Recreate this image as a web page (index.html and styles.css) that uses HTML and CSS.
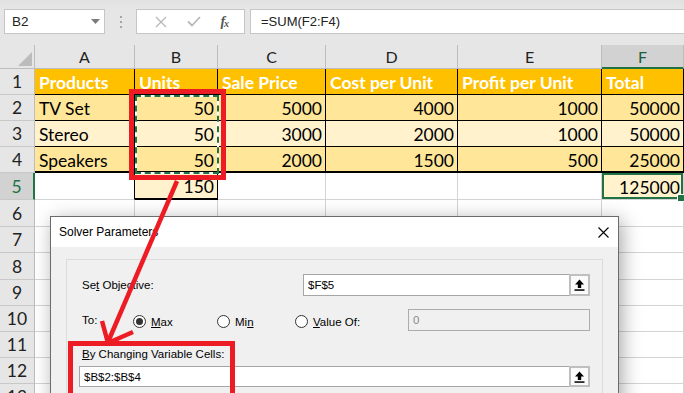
FILE: index.html
```html
<!DOCTYPE html>
<html>
<head>
<meta charset="utf-8">
<link rel="stylesheet" href="styles.css">
</head>
<body>
<div class="app">
  <div class="fbar">
    <div class="namebox"><span>B2</span><svg class="dd" width="9" height="5" viewBox="0 0 9 5"><path d="M0 0 H9 L4.5 5 Z" fill="#7a7a7a"/></svg></div>
    <div class="grip"><i></i><i></i><i></i></div>
    <div class="fxbtns">
      <svg width="12" height="12" viewBox="0 0 12 12"><path d="M1 1 L11 11 M11 1 L1 11" stroke="#b9b9b9" stroke-width="1.4"/></svg>
      <svg width="14" height="11" viewBox="0 0 14 11"><path d="M1 5.5 L5 9.5 L13 1" stroke="#b9b9b9" stroke-width="1.8" fill="none"/></svg>
      <span class="fx">f<sub>x</sub></span>
    </div>
    <div class="formula">=SUM(F2:F4)</div>
  </div>

  <div class="sheet">
    <div class="corner"><svg width="14" height="14" viewBox="0 0 14 14"><path d="M14 0 V14 H0 Z" fill="#bcbcbc"/></svg></div>
    <div class="ch">A</div><div class="ch">B</div><div class="ch">C</div><div class="ch">D</div><div class="ch">E</div><div class="ch sel">F</div>

    <div class="rh">1</div>
    <div class="c d hd">Products</div><div class="c d hd">Units</div><div class="c d hd">Sale Price</div><div class="c d hd">Cost per Unit</div><div class="c d hd">Profit per Unit</div><div class="c d hd">Total</div>

    <div class="rh">2</div>
    <div class="c d dk">TV Set</div><div class="c d dk n">50</div><div class="c d dk n">5000</div><div class="c d dk n">4000</div><div class="c d dk n">1000</div><div class="c d dk n">50000</div>

    <div class="rh">3</div>
    <div class="c d lt">Stereo</div><div class="c d lt n">50</div><div class="c d lt n">3000</div><div class="c d lt n">2000</div><div class="c d lt n">1000</div><div class="c d lt n">50000</div>

    <div class="rh">4</div>
    <div class="c d dk last">Speakers</div><div class="c d dk last n">50</div><div class="c d dk last n">2000</div><div class="c d dk last n">1500</div><div class="c d dk last n">500</div><div class="c d dk last n">25000</div>

    <div class="rh rsel">5</div>
    <div class="c bl"></div><div class="c lt n tot">150</div><div class="c"></div><div class="c"></div><div class="c"></div><div class="c lt n active">125000</div>

    <div class="rh">6</div><div class="c"></div><div class="c"></div><div class="c"></div><div class="c"></div><div class="c"></div><div class="c"></div>
    <div class="rh">7</div><div class="c"></div><div class="c"></div><div class="c"></div><div class="c"></div><div class="c"></div><div class="c"></div>
    <div class="rh">8</div><div class="c"></div><div class="c"></div><div class="c"></div><div class="c"></div><div class="c"></div><div class="c"></div>
    <div class="rh">9</div><div class="c"></div><div class="c"></div><div class="c"></div><div class="c"></div><div class="c"></div><div class="c"></div>
    <div class="rh">10</div><div class="c"></div><div class="c"></div><div class="c"></div><div class="c"></div><div class="c"></div><div class="c"></div>
    <div class="rh">11</div><div class="c"></div><div class="c"></div><div class="c"></div><div class="c"></div><div class="c"></div><div class="c"></div>
    <div class="rh">12</div><div class="c"></div><div class="c"></div><div class="c"></div><div class="c"></div><div class="c"></div><div class="c"></div>
    <div class="rh">13</div><div class="c"></div><div class="c"></div><div class="c"></div><div class="c"></div><div class="c"></div><div class="c"></div>
  </div>

  <div class="ants"></div>
  <div class="redbox rb1"></div>

  <div class="dialog">
    <div class="titlebar">
      <span>Solver Parameters</span>
      <svg width="11" height="11" viewBox="0 0 11 11"><path d="M0.5 0.5 L10.5 10.5 M10.5 0.5 L0.5 10.5" stroke="#000" stroke-width="1.1"/></svg>
    </div>
    <div class="dbody">
      <div class="group">
        <div class="row r1">
          <span class="lbl">Se<u>t</u> Objective:</span>
          <div class="inp obj"><span>$F$5</span><div class="pick"><svg width="11" height="12" viewBox="0 0 11 12"><path d="M5.5 0.5 L1 5.5 H3.8 V9 H7.2 V5.5 H10 Z" fill="#000"/><rect x="0.5" y="10.3" width="10" height="1.5" fill="#000"/></svg></div></div>
        </div>
        <div class="row r2">
          <span class="lbl to">To:</span>
          <span class="radio w1"><i class="dot on"></i><span><u>M</u>ax</span></span>
          <span class="radio w2"><i class="dot"></i><span>Mi<u>n</u></span></span>
          <span class="radio"><i class="dot"></i><span><u>V</u>alue Of:</span></span>
          <div class="inp val"><span>0</span></div>
        </div>
        <div class="row r3"><span class="lbl"><u>B</u>y Changing Variable Cells:</span></div>
        <div class="row r4">
          <div class="inp chg"><span>$B$2:$B$4</span><div class="pick"><svg width="11" height="12" viewBox="0 0 11 12"><path d="M5.5 0.5 L1 5.5 H3.8 V9 H7.2 V5.5 H10 Z" fill="#000"/><rect x="0.5" y="10.3" width="10" height="1.5" fill="#000"/></svg></div></div>
        </div>
      </div>
    </div>
  </div>

  <div class="redbox rb2"></div>

  <svg class="arrow" width="684" height="393" viewBox="0 0 684 393">
    <path d="M177 181 L108 342" stroke="#ed1c24" stroke-width="4.5" fill="none"/>
    <path d="M102 321 L108 343 L133 332" stroke="#ed1c24" stroke-width="4.5" fill="none" stroke-linejoin="miter"/>
  </svg>
</div>
</body>
</html>
```

FILE: styles.css
```css
* { box-sizing: border-box; }
html, body { margin: 0; padding: 0; }
body { background: #fff; width: 684px; height: 393px; overflow: hidden; }

.app { position: relative; width: 684px; height: 393px; overflow: hidden; font-family: "Lato", sans-serif; }

/* formula bar */
.fbar {
  height: 45px;
  background: linear-gradient(#e1e1e1 0, #e6e6e6 8px);
  display: flex;
  align-items: flex-start;
  padding-top: 9px;
  padding-left: 4px;
}
.namebox {
  width: 101px; height: 25px;
  background: #fff; border: 1px solid #c6c6c6;
  display: flex; align-items: center; justify-content: space-between;
  padding: 0 4px 0 7px;
  font: 13.5px "Liberation Sans", sans-serif; color: #222;
}
.grip { width: 31px; height: 25px; display: flex; flex-direction: column; align-items: center; justify-content: center; gap: 3px; }
.grip i { width: 2px; height: 2px; background: #a6a6a6; display: block; }
.fxbtns {
  width: 109px; height: 25px;
  background: #fff; border: 1px solid #c6c6c6;
  display: flex; align-items: center; justify-content: space-around;
  padding: 0 6px 0 8px;
}
.fx { font: italic 14px "Liberation Serif", serif; color: #555; font-weight: bold; letter-spacing: -1px; }
.fx sub { font-size: 10px; vertical-align: -1px; }
.formula {
  margin-left: 5px; flex: 1; height: 25px;
  background: #fff; border: 1px solid #c6c6c6; border-right: none;
  padding-left: 10px;
  font: 13px/23px "Liberation Sans", sans-serif; color: #222;
}

/* sheet */
.sheet {
  display: grid;
  grid-template-columns: 35px 100px 83px 108px 132px 144px 82px;
  grid-template-rows: 24px 26px 26px 26px 26px 27px 27px 26px 27px 26px 26px 26px 26px 26px;
}
.corner { background: #e6e6e6; border-right: 1px solid #bdbdbd; border-bottom: 1px solid #bdbdbd; display: flex; align-items: flex-end; justify-content: flex-end; padding: 0 2px 2px 0; }
.ch {
  background: #e6e6e6; border-right: 1px solid #bdbdbd; border-bottom: 1px solid #bdbdbd;
  display: flex; align-items: center; justify-content: center;
  font-size: 16px; color: #222;
}
.ch.sel { background: #d2d2d2; border-bottom: 2px solid #217346; color: #1c5d38; }
.rh {
  background: #e6e6e6; border-right: 1px solid #bdbdbd; border-bottom: 1px solid #c8c8c8;
  display: flex; align-items: center; justify-content: center;
  font-size: 17.5px; color: #222;
}
.rh.rsel { background: #d2d2d2; color: #217346; border-right: 2px solid #217346; }
.c {
  border-right: 1px solid #d4d4d4; border-bottom: 1px solid #d4d4d4;
  display: flex; align-items: center;
  padding: 2px 3px 0 4px;
  font-size: 17.5px; color: #000; white-space: nowrap; overflow: hidden;
}
.c.n { justify-content: flex-end; }
.c.d { border-right-color: #000; border-bottom-color: #000; }
.c.hd { background: #ffc000; color: #fff; font-weight: bold; }
.c.dk { background: #ffe699; }
.c.lt { background: #fff2cc; }
.c.last { border-bottom: 2px solid #000; }
.c.bl { border-right-color: #000; }
.c.tot { border-right-color: #000; border-bottom: 2px solid #000; }
.c.active { position: relative; box-shadow: inset 0 0 0 2px #217346; overflow: visible; }
.c.active::after {
  content: ""; position: absolute; right: -2px; bottom: -3px;
  width: 6px; height: 6px; background: #217346; border: 1px solid #fff;
}

/* marching ants */
.ants {
  position: absolute; left: 135px; top: 95px; width: 84px; height: 79px;
  border: 2px solid #fff;
}
.ants::after {
  content: ""; position: absolute; inset: -2px;
  border: 2px dashed #217346;
}

.redbox { position: absolute; border: 5px solid #ed1c24; }
.rb1 { left: 129px; top: 89px; width: 97px; height: 91px; }
.rb2 { left: 68px; top: 341px; width: 167px; height: 70px; }

.arrow { position: absolute; left: 0; top: 0; pointer-events: none; }

/* dialog */
.dialog {
  position: absolute; left: 50px; top: 216px; width: 569px; height: 220px;
  border: 1px solid #6b6b6b; background: #f0f0f0;
  box-shadow: 3px 4px 18px rgba(0,0,0,0.35);
  font: 11.5px "Liberation Sans", sans-serif; color: #000;
}
.titlebar {
  height: 30px; background: #fff;
  display: flex; align-items: center; justify-content: space-between;
  padding: 0 9px 0 8px; font-size: 12px;
}
.dbody { padding: 12px 15px 0; }
.group { border: 1px solid #dcdcdc; height: 200px; padding: 14px 12px 0 15px; }
.row { display: flex; align-items: center; }
.r1 { height: 22px; margin-bottom: 13px; }
.r2 { height: 22px; margin-bottom: 15px; }
.r3 { height: 16px; margin-bottom: 4px; }
.r4 { height: 21px; }
.lbl.to { width: 51px; }
.radio { display: flex; align-items: center; gap: 5px; padding-top: 3px; }
.radio.w1 { width: 84px; }
.radio.w2 { width: 78px; }
.dot { display: block; width: 13px; height: 13px; border-radius: 50%; border: 1px solid #333; background: #fff; position: relative; }
.dot.on::after { content: ""; position: absolute; left: 2px; top: 2px; width: 7px; height: 7px; border-radius: 50%; background: #333; }
.inp {
  height: 100%; background: #fff; border: 1px solid #a6a6a6;
  display: flex; align-items: center; justify-content: space-between;
  padding-left: 4px;
}
.inp.obj { margin-left: auto; width: 287px; }
.inp.val { margin-left: auto; width: 182px; background: #f0f0f0; border-color: #acacac; color: #8a8a8a; padding: 2px; }
.inp.val span { padding-left: 2px; }
.inp.chg { margin-left: -3px; width: 511px; }
.pick {
  width: 21px; height: calc(100% + 2px); margin-right: -1px;
  border: 2px solid #bfbfbf; background: #fafafa;
  display: flex; align-items: center; justify-content: center;
}
```
